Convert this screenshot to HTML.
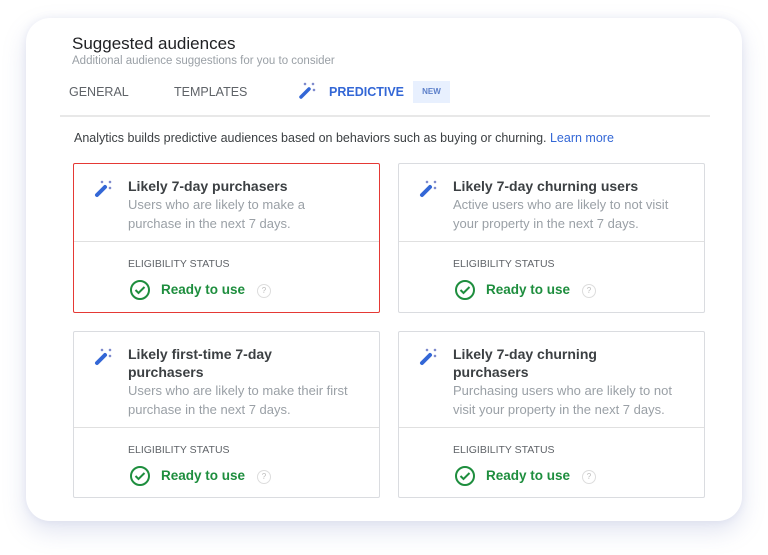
<!DOCTYPE html><html><head><style>
body{margin:0;width:768px;height:555px;background:#fff;font-family:"Liberation Sans",Arial,sans-serif;overflow:hidden;position:relative}
.panel{position:absolute;left:26px;top:18px;width:716px;height:503px;background:#fff;border-radius:24px;box-shadow:0 10px 24px rgba(120,130,190,.22),0 0 8px rgba(120,130,190,.12)}
.a{position:absolute;white-space:nowrap}
.card{position:absolute;width:305px;border:1px solid #dadce0;border-radius:2px;background:#fff}
.card.sel{border-color:#e53935}
.t{position:absolute;left:54px;top:13px;font-size:14px;font-weight:bold;color:#3c4043;line-height:18px;white-space:nowrap}
.d{font-weight:normal;color:#9aa0a6;font-size:13px}
.div{position:absolute;left:0;right:0;height:1px;background:#e0e0e0}
.es{position:absolute;left:54px;font-size:10.5px;color:#5f6368}
.r{position:absolute;left:87px;font-size:13.5px;font-weight:bold;color:#1e8e3e}
.q{display:inline-block;width:12px;height:12px;border:1px solid #ddd;border-radius:50%;font-size:8px;color:#bbb;text-align:center;line-height:12px;margin-left:12px;vertical-align:1px;font-weight:normal}
.wand{position:absolute;left:20px;top:14px}
.ck{position:absolute;left:-32px;top:-3px}
</style></head><body>
<div class="panel"></div>
<div class="a" style="left:72px;top:34px;font-size:17px;color:#202124">Suggested audiences</div>
<div class="a" style="left:72px;top:55px;font-size:11.5px;color:#9aa0a6">Additional audience suggestions for you to consider</div>
<div class="a" style="left:69px;top:85px;font-size:12.5px;color:#5f6368">GENERAL</div>
<div class="a" style="left:174px;top:85px;font-size:12.5px;color:#5f6368">TEMPLATES</div>
<svg class="a" style="left:298px;top:81px" width="20" height="18" viewBox="0 0 20 18"><path d="M3 16 L11 8" stroke="#3367d6" stroke-width="3.5" stroke-linecap="round"/><g stroke="#7986cb" stroke-width="1.2"><path d="M6 2l2 2M8 2l-2 2M14 2l2 2M16 2l-2 2M15 8l2 2M17 8l-2 2"/></g></svg>
<div class="a" style="left:329px;top:85px;font-size:12.5px;color:#3367d6;font-weight:bold">PREDICTIVE</div>
<div class="a" style="left:413px;top:81px;width:37px;height:22px;background:#e8f0fe;color:#5c7fc9;font-size:8px;font-weight:bold;text-align:center;line-height:22px">NEW</div>
<div class="a" style="left:60px;top:115px;width:650px;height:2px;background:#e8e8e8"></div>
<div class="a" style="left:74px;top:131px;font-size:12.5px;color:#3c4043">Analytics builds predictive audiences based on behaviors such as buying or churning. <span style="color:#3367d6">Learn more</span></div>

<div class="card sel" style="left:73px;top:163px;height:148px">
<svg class="wand" width="22" height="20" viewBox="0 0 22 20"><path d="M3 17 L11 9" stroke="#3367d6" stroke-width="4" stroke-linecap="round"/><g stroke="#7986cb" stroke-width="1.2"><path d="M7 3l2 2M9 3l-2 2M15 3l2 2M17 3l-2 2M15 9l2 2M17 9l-2 2"/></g></svg>
<div class="t">Likely 7-day purchasers<br><span class="d">Users who are likely to make a<br>purchase in the next 7 days.</span></div>
<div class="div" style="top:77px"></div>
<div class="es" style="top:94px">ELIGIBILITY STATUS</div>
<div class="r" style="top:118px"><svg class="ck" width="22" height="22" viewBox="0 0 22 22"><circle cx="11" cy="11" r="9" fill="none" stroke="#1e8e3e" stroke-width="2"/><path d="M6.5 11l3 3 6-6" fill="none" stroke="#1e8e3e" stroke-width="2"/></svg>Ready to use<span class="q">?</span></div>
</div>
<div class="card" style="left:398px;top:163px;height:148px">
<svg class="wand" width="22" height="20" viewBox="0 0 22 20"><path d="M3 17 L11 9" stroke="#3367d6" stroke-width="4" stroke-linecap="round"/><g stroke="#7986cb" stroke-width="1.2"><path d="M7 3l2 2M9 3l-2 2M15 3l2 2M17 3l-2 2M15 9l2 2M17 9l-2 2"/></g></svg>
<div class="t">Likely 7-day churning users<br><span class="d">Active users who are likely to not visit<br>your property in the next 7 days.</span></div>
<div class="div" style="top:77px"></div>
<div class="es" style="top:94px">ELIGIBILITY STATUS</div>
<div class="r" style="top:118px"><svg class="ck" width="22" height="22" viewBox="0 0 22 22"><circle cx="11" cy="11" r="9" fill="none" stroke="#1e8e3e" stroke-width="2"/><path d="M6.5 11l3 3 6-6" fill="none" stroke="#1e8e3e" stroke-width="2"/></svg>Ready to use<span class="q">?</span></div>
</div>
<div class="card" style="left:73px;top:331px;height:165px">
<svg class="wand" width="22" height="20" viewBox="0 0 22 20"><path d="M3 17 L11 9" stroke="#3367d6" stroke-width="4" stroke-linecap="round"/><g stroke="#7986cb" stroke-width="1.2"><path d="M7 3l2 2M9 3l-2 2M15 3l2 2M17 3l-2 2M15 9l2 2M17 9l-2 2"/></g></svg>
<div class="t">Likely first-time 7-day<br>purchasers<br><span class="d">Users who are likely to make their first<br>purchase in the next 7 days.</span></div>
<div class="div" style="top:95px"></div>
<div class="es" style="top:112px">ELIGIBILITY STATUS</div>
<div class="r" style="top:136px"><svg class="ck" width="22" height="22" viewBox="0 0 22 22"><circle cx="11" cy="11" r="9" fill="none" stroke="#1e8e3e" stroke-width="2"/><path d="M6.5 11l3 3 6-6" fill="none" stroke="#1e8e3e" stroke-width="2"/></svg>Ready to use<span class="q">?</span></div>
</div>
<div class="card" style="left:398px;top:331px;height:165px">
<svg class="wand" width="22" height="20" viewBox="0 0 22 20"><path d="M3 17 L11 9" stroke="#3367d6" stroke-width="4" stroke-linecap="round"/><g stroke="#7986cb" stroke-width="1.2"><path d="M7 3l2 2M9 3l-2 2M15 3l2 2M17 3l-2 2M15 9l2 2M17 9l-2 2"/></g></svg>
<div class="t">Likely 7-day churning<br>purchasers<br><span class="d">Purchasing users who are likely to not<br>visit your property in the next 7 days.</span></div>
<div class="div" style="top:95px"></div>
<div class="es" style="top:112px">ELIGIBILITY STATUS</div>
<div class="r" style="top:136px"><svg class="ck" width="22" height="22" viewBox="0 0 22 22"><circle cx="11" cy="11" r="9" fill="none" stroke="#1e8e3e" stroke-width="2"/><path d="M6.5 11l3 3 6-6" fill="none" stroke="#1e8e3e" stroke-width="2"/></svg>Ready to use<span class="q">?</span></div>
</div>
</body></html>
